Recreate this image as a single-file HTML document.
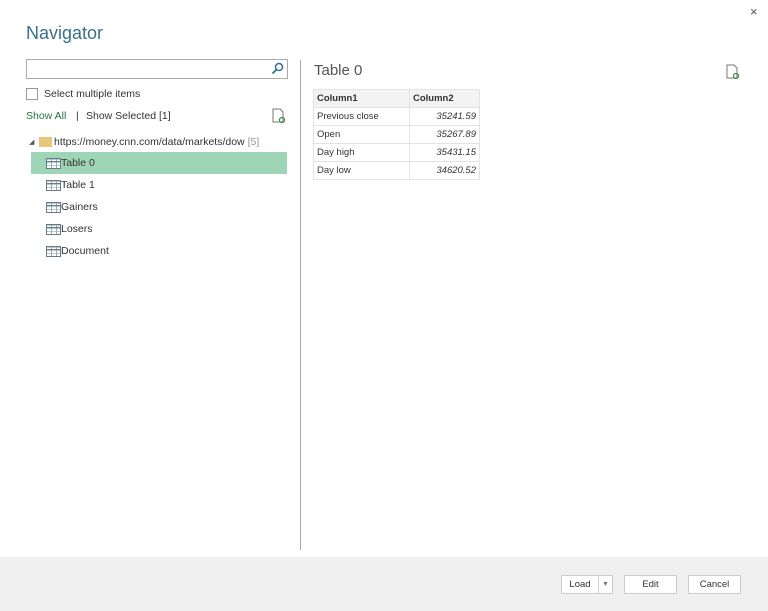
<!DOCTYPE html><html><head><style>
body{margin:0;width:768px;height:611px;background:#fff;font-family:"Liberation Sans",sans-serif;font-size:10.5px;color:#333;position:relative;overflow:hidden}
.a{position:absolute}
.tb{width:15px;height:11px;border:1px solid #6a7a8a;box-sizing:border-box;background:
linear-gradient(#6a7a8a,#6a7a8a) 0 2px/100% 1px no-repeat,
repeating-linear-gradient(90deg,transparent 0 4px,#9aa 4px 5px),
repeating-linear-gradient(0deg,transparent 0 2px,#bcc 2px 3px);background-color:#fff}
td{border:1px solid #e3e3e3;height:17px;padding:0 3px;font-size:9.5px}
.btn{position:absolute;top:575px;height:19px;border:1px solid #ccc;background:#fff;box-sizing:border-box;font-size:9.5px;text-align:center;line-height:17px}
</style></head><body>
<div class="a" style="left:750px;top:4px;font-size:13px;color:#555">×</div>
<div class="a" style="left:26px;top:23px;font-size:18px;color:#3a7088">Navigator</div>
<div class="a" style="left:26px;top:59px;width:262px;height:20px;border:1px solid #ababab;box-sizing:border-box"></div>
<svg class="a" style="left:271px;top:62px" width="14" height="14"><circle cx="8" cy="5" r="3.5" fill="none" stroke="#2a6e9a" stroke-width="1.5"/><path d="M5.5 7.5 L1.5 11.5" stroke="#2a6e9a" stroke-width="1.8"/></svg>
<div class="a" style="left:26px;top:88px;width:10px;height:10px;border:1px solid #999"></div>
<div class="a" style="left:44px;top:88px">Select multiple items</div>
<div class="a" style="left:26px;top:110px;color:#217346">Show All</div>
<div class="a" style="left:76px;top:110px">|</div>
<div class="a" style="left:86px;top:110px">Show Selected [1]</div>
<svg class="a" style="left:272px;top:108px" width="14" height="16"><path d="M1 1h7l3 3v10H1z" fill="#fff" stroke="#777"/><circle cx="10" cy="12" r="2.5" fill="none" stroke="#3a8a4a" stroke-width="1.2"/></svg>
<div class="a" style="left:29px;top:138px;font-size:7px;color:#555">◢</div>
<div class="a" style="left:39px;top:137px;width:13px;height:10px;background:#e8c77a"></div>
<div class="a" style="left:54px;top:136px">https://money.cnn.com/data/markets/dow <span style="color:#999">[5]</span></div>
<div class="a" style="left:31px;top:152px;width:256px;height:22px;background:#9fd5b7"></div>
<div class="tb a" style="left:46px;top:158px"></div><div class="a" style="left:61px;top:157px">Table 0</div>
<div class="tb a" style="left:46px;top:180px"></div><div class="a" style="left:61px;top:179px">Table 1</div>
<div class="tb a" style="left:46px;top:202px"></div><div class="a" style="left:61px;top:201px">Gainers</div>
<div class="tb a" style="left:46px;top:224px"></div><div class="a" style="left:61px;top:223px">Losers</div>
<div class="tb a" style="left:46px;top:246px"></div><div class="a" style="left:61px;top:245px">Document</div>
<div class="a" style="left:300px;top:60px;width:1px;height:490px;background:#aaa"></div>
<div class="a" style="left:314px;top:62px;font-size:15px;color:#555">Table 0</div>
<svg class="a" style="left:726px;top:64px" width="14" height="16"><path d="M1 1h7l3 3v10H1z" fill="#fff" stroke="#777"/><circle cx="10" cy="12" r="2.5" fill="none" stroke="#3a8a4a" stroke-width="1.2"/></svg>
<table class="a" style="left:313px;top:89px;border-collapse:collapse;width:167px">
<tr style="background:#f3f3f3"><td style="width:89px;font-weight:bold">Column1</td><td style="font-weight:bold">Column2</td></tr>
<tr><td>Previous close</td><td style="text-align:right;font-style:italic">35241.59</td></tr>
<tr><td>Open</td><td style="text-align:right;font-style:italic">35267.89</td></tr>
<tr><td>Day high</td><td style="text-align:right;font-style:italic">35431.15</td></tr>
<tr><td>Day low</td><td style="text-align:right;font-style:italic">34620.52</td></tr>
</table>
<div class="a" style="left:0;top:557px;width:768px;height:54px;background:#f0f0f0"></div>
<div class="btn" style="left:561px;width:38px">Load</div>
<div class="btn" style="left:598px;width:15px;font-size:7px;color:#777">▼</div>
<div class="btn" style="left:624px;width:53px">Edit</div>
<div class="btn" style="left:688px;width:53px">Cancel</div>
</body></html>
